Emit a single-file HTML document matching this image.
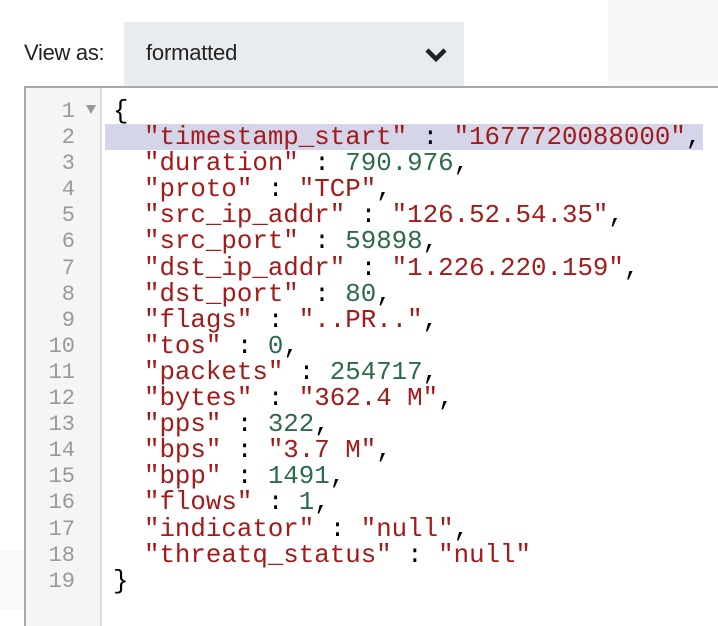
<!DOCTYPE html>
<html><head><meta charset="utf-8"><style>
*{margin:0;padding:0;box-sizing:border-box}
body{width:718px;height:610px;overflow:hidden;background:#fff;position:relative;font-family:"Liberation Sans",sans-serif}
.rp{position:absolute;left:608px;top:0;width:110px;height:86px;background:#f7f8fa}
.lp{position:absolute;left:0;top:550px;width:24px;height:60px;background:#f8f9fa}
.lbl{position:absolute;left:24px;top:40px;font-size:22px;color:#222;letter-spacing:-0.3px}
.sel{position:absolute;left:124px;top:22px;width:340px;height:64px;background:#e9ecef}
.sel span{position:absolute;left:22px;top:18px;font-size:22px;color:#222;letter-spacing:-0.2px}
.sel svg{position:absolute;left:300px;top:25px}
.ed{position:absolute;left:24px;top:86px;width:720px;height:540px;border:2px solid #aaa;border-right:none;border-bottom:none;background:#fff}
.gut{position:absolute;left:0;top:0;width:76px;height:100%;background:#f5f5f5;border-right:2px solid #ddd}
.ln{position:absolute;left:0;width:49px;text-align:right;font-family:"Liberation Mono",monospace;font-size:22px;color:#999;line-height:26.1px}
.arr{position:absolute;left:60px;top:17px;width:0;height:0;border-left:5px solid transparent;border-right:5px solid transparent;border-top:9px solid #999}
.hl{position:absolute;left:79px;top:36px;width:598px;height:26px;background:#d5d5ea}
pre{position:absolute;left:87px;top:11px;font-family:"Liberation Mono",monospace;font-size:25.8px;line-height:26.1px;color:#000}
.k{color:#a31a1a}.n{color:#2e6b4a}
</style></head><body>
<div class="rp"></div><div class="lp"></div>
<div class="lbl">View as:</div>
<div class="sel"><span>formatted</span><svg width="24" height="16" viewBox="0 0 24 16"><path d="M3 3 L12 12 L21 3" stroke="#222" stroke-width="4.5" fill="none"/></svg></div>
<div class="ed">
<div class="gut"><div class="ln" style="top:11px">1<br>2<br>3<br>4<br>5<br>6<br>7<br>8<br>9<br>10<br>11<br>12<br>13<br>14<br>15<br>16<br>17<br>18<br>19</div><div class="arr"></div></div>
<div class="hl"></div>
<pre>{
  <span class="k">"timestamp_start"</span> : <span class="k">"1677720088000"</span>,
  <span class="k">"duration"</span> : <span class="n">790.976</span>,
  <span class="k">"proto"</span> : <span class="k">"TCP"</span>,
  <span class="k">"src_ip_addr"</span> : <span class="k">"126.52.54.35"</span>,
  <span class="k">"src_port"</span> : <span class="n">59898</span>,
  <span class="k">"dst_ip_addr"</span> : <span class="k">"1.226.220.159"</span>,
  <span class="k">"dst_port"</span> : <span class="n">80</span>,
  <span class="k">"flags"</span> : <span class="k">"..PR.."</span>,
  <span class="k">"tos"</span> : <span class="n">0</span>,
  <span class="k">"packets"</span> : <span class="n">254717</span>,
  <span class="k">"bytes"</span> : <span class="k">"362.4 M"</span>,
  <span class="k">"pps"</span> : <span class="n">322</span>,
  <span class="k">"bps"</span> : <span class="k">"3.7 M"</span>,
  <span class="k">"bpp"</span> : <span class="n">1491</span>,
  <span class="k">"flows"</span> : <span class="n">1</span>,
  <span class="k">"indicator"</span> : <span class="k">"null"</span>,
  <span class="k">"threatq_status"</span> : <span class="k">"null"</span>
}</pre>
</div>
</body></html>
